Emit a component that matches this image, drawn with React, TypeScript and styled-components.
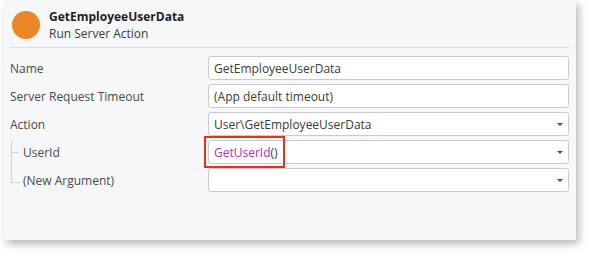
import React from 'react'
import styled, { createGlobalStyle } from 'styled-components'

const GlobalStyle = createGlobalStyle`
  html, body {
    margin: 0;
    background: #ffffff;
  }
  body {
    font-family: "Open Sans", "Noto Sans", sans-serif;
    font-size: 12px;
    color: #3c3c3c;
  }
`

const Page = styled.div`
  padding: 0 0 0 4px;
  width: 590px;
  height: 256px;
  box-sizing: border-box;
`

const Panel = styled.div`
  width: 572px;
  height: 240px;
  background: #f6f7f9;
  box-shadow: 3px 4px 8px rgba(0, 0, 0, 0.28);
  box-sizing: border-box;
  padding: 0 7px 0 6px;
`

const Header = styled.div`
  display: flex;
  align-items: center;
  gap: 9px;
  height: 48px;
  padding: 0 0 0 2px;
  border-bottom: 1px solid #dcdee2;
  box-sizing: border-box;
`

const Badge = styled.div`
  width: 28px;
  height: 28px;
  border-radius: 50%;
  background: #ea8528;
  margin-top: 2px;
`

const HeaderText = styled.div`
  display: flex;
  flex-direction: column;
  line-height: 17px;
  margin-top: 2px;
`

const Title = styled.div`
  font-weight: 700;
  color: #1f1f1f;
`

const Subtitle = styled.div`
  color: #3c3c3c;
`

const Grid = styled.div`
  display: grid;
  grid-template-columns: 198px 361px;
  grid-auto-rows: 24px;
  row-gap: 4px;
  padding-top: 8px;
`

const Label = styled.div<{ $nested?: 'mid' | 'last' }>`
  position: relative;
  display: flex;
  align-items: center;
  padding-left: ${({ $nested }) => ($nested ? '13px' : '0')};
  color: #4a4a4a;
  white-space: nowrap;

  ${({ $nested }) =>
    $nested === 'mid' &&
    `
    &::before {
      content: '';
      position: absolute;
      left: 1px;
      top: 0;
      bottom: -4px;
      border-left: 1px solid #cfd1d4;
    }
    &::after {
      content: '';
      position: absolute;
      left: 1px;
      top: 12px;
      width: 8px;
      border-top: 1px solid #cfd1d4;
    }
  `}

  ${({ $nested }) =>
    $nested === 'last' &&
    `
    &::before {
      content: '';
      position: absolute;
      left: 1px;
      top: 0;
      height: 14px;
      width: 8px;
      border-left: 1px solid #cfd1d4;
      border-bottom: 1px solid #cfd1d4;
    }
  `}
`

const Field = styled.div`
  position: relative;
  display: flex;
  align-items: center;
  background: #ffffff;
  border: 1px solid #c9cbcf;
  border-radius: 3px;
  padding: 0 5px;
  box-sizing: border-box;
  color: #3a3a3a;
`

const Caret = styled.span`
  position: absolute;
  right: 5px;
  top: 10px;
  width: 0;
  height: 0;
  border-left: 3px solid transparent;
  border-right: 3px solid transparent;
  border-top: 3px solid #4a4f57;
`

const Func = styled.span`
  color: #b02fc0;
`

const Highlight = styled.div`
  position: absolute;
  left: -5px;
  top: -5px;
  width: 81px;
  height: 32px;
  border: 2px solid #e8301c;
  box-sizing: border-box;
  pointer-events: none;
`

export default function App() {
  return (
    <Page>
      <GlobalStyle />
      <Panel>
        <Header>
          <Badge />
          <HeaderText>
            <Title>GetEmployeeUserData</Title>
            <Subtitle>Run Server Action</Subtitle>
          </HeaderText>
        </Header>
        <Grid>
          <Label>Name</Label>
          <Field>GetEmployeeUserData</Field>

          <Label>Server Request Timeout</Label>
          <Field>(App default timeout)</Field>

          <Label>Action</Label>
          <Field>
            User\GetEmployeeUserData
            <Caret />
          </Field>

          <Label $nested="mid">UserId</Label>
          <Field>
            <Func>GetUserId</Func>()
            <Caret />
            <Highlight />
          </Field>

          <Label $nested="last">(New Argument)</Label>
          <Field>
            <Caret />
          </Field>
        </Grid>
      </Panel>
    </Page>
  )
}
